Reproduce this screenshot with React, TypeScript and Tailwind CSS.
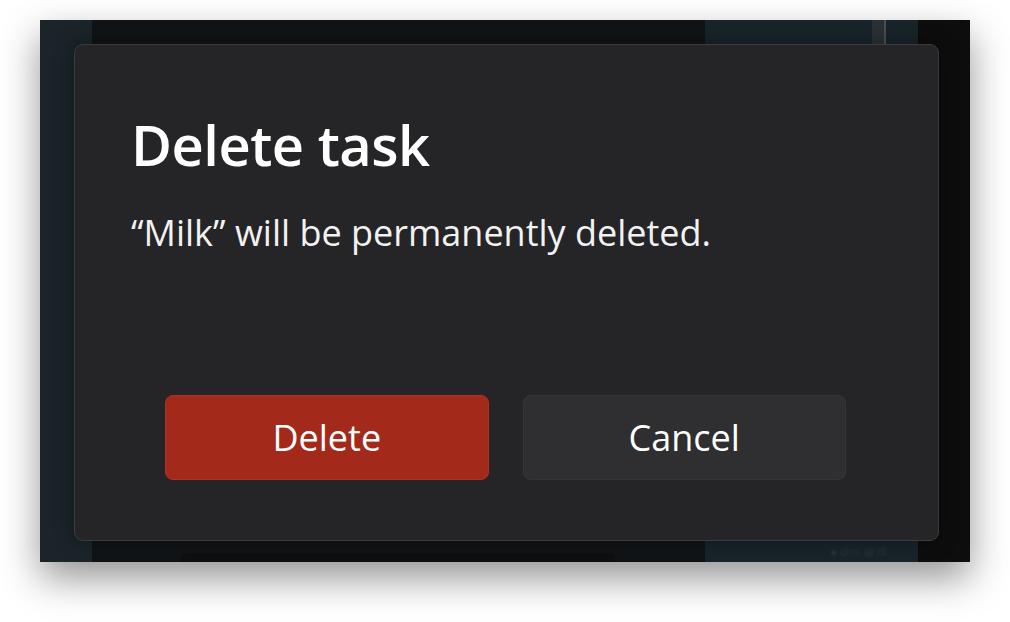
import React from "react";

export default function App() {
  return (
    <div className="w-[1010px] h-[622px] bg-white pt-[20px] pl-[40px] overflow-hidden" style={{ fontFamily: '"Open Sans", "Noto Sans", sans-serif' }}>
      <div className="relative w-[930px] h-[542px] flex shadow-[0_16px_36px_rgba(0,0,0,0.42)]">
        {/* backdrop columns */}
        <div className="w-[52px] h-full bg-[#1a2429]" />
        <div className="w-[613px] h-full bg-[#111416] flex flex-col">
          <div className="mt-auto ml-[88px] w-[435px] h-[9px] rounded-t-[8px] bg-[#0e0f10]" />
        </div>
        <div className="w-[213px] h-full bg-[#18232a] flex flex-col">
          <div className="ml-[167px] w-[14px] h-[24px] bg-[#2a3034] flex justify-end">
            <div className="w-[2px] h-full bg-[#4a4e52]" />
          </div>
          <div className="mt-auto mb-[4px] ml-[125px] flex gap-[3px] items-end text-[12px] leading-none text-[#2a3438] blur-[0.8px]">
            <span>●</span><span>dos</span><span>⊞</span><span>dl</span>
          </div>
        </div>
        <div className="w-[52px] h-full bg-[#0d0d0d]" />

        {/* dialog */}
        <div className="absolute left-[34px] top-[24px] w-[865px] h-[497px] rounded-[9px] border border-[#3b3b3d] bg-[#252527] flex flex-col shadow-[0_0_20px_rgba(0,0,0,0.35)]">
          <div className="pl-[56px] pt-[64px]">
            <h1 className="text-[56px] leading-[70px] font-semibold text-white tracking-[-0.5px]">Delete task</h1>
            <p className="mt-[30px] text-[36px] leading-[48px] text-[#f2f2f2]">“Milk” will be permanently deleted.</p>
          </div>
          <div className="mt-auto pb-[60px] pl-[90px] pr-[92px] grid grid-cols-2 gap-[34px]">
            <button className="h-[85px] rounded-[8px] bg-[#a3291b] border border-[#ad3324] text-[36px] leading-[48px] text-white">Delete</button>
            <button className="h-[85px] rounded-[8px] bg-[#2f2f31] border border-[#363638] text-[36px] leading-[48px] text-white">Cancel</button>
          </div>
        </div>
      </div>
    </div>
  );
}
